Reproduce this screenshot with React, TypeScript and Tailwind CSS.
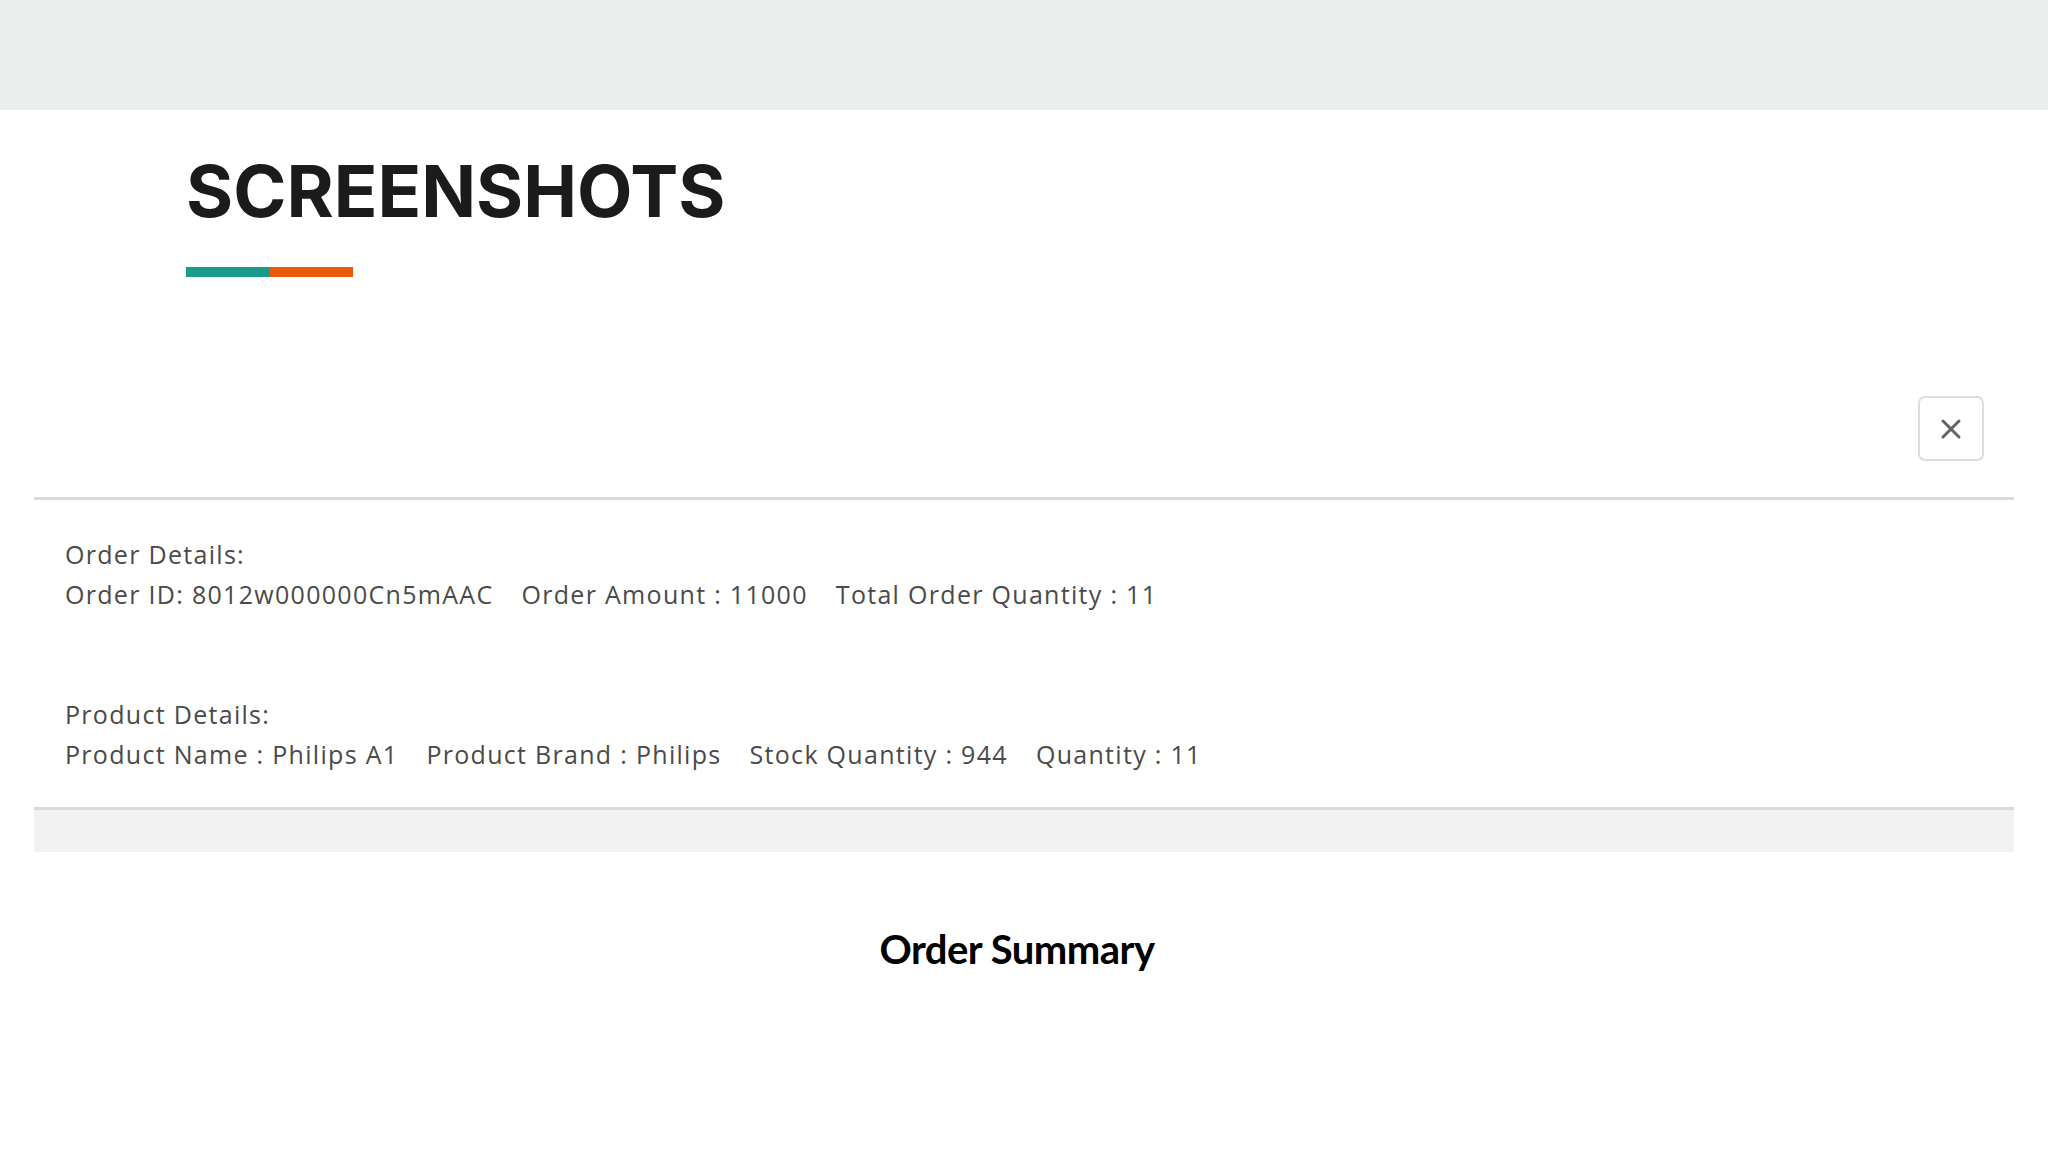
import React from "react";

const orderInfo = [
  "Order ID: 8012w000000Cn5mAAC",
  "Order Amount : 11000",
  "Total Order Quantity : 11",
];

const productInfo = [
  "Product Name : Philips A1",
  "Product Brand : Philips",
  "Stock Quantity : 944",
  "Quantity : 11",
];

function CloseIcon() {
  return (
    <svg width="22" height="22" viewBox="0 0 22 22" fill="none">
      <path d="M3 3 L19 19 M19 3 L3 19" stroke="#636363" strokeWidth="3" strokeLinecap="round" />
    </svg>
  );
}

function DetailBlock({ title, items }: { title: string; items: string[] }) {
  return (
    <div className="flex flex-col">
      <div className="h-[40px] leading-[40px]">{title}</div>
      <div className="flex h-[40px] items-center gap-[28px] leading-[40px]">
        {items.map((item) => (
          <span key={item}>{item}</span>
        ))}
      </div>
    </div>
  );
}

export default function App() {
  return (
    <div className="min-h-[1152px] w-full bg-white">
      {/* top strip */}
      <div className="h-[110px] w-full bg-[#e9eeed]" />

      {/* heading */}
      <div className="pl-[186px] pt-[45px]">
        <h1
          className="text-[72px] font-bold leading-none text-[#1b1b1b]"
          style={{ fontFamily: "Inter, 'Open Sans', sans-serif" }}
        >
          SCREENSHOTS
        </h1>
        <div className="mt-[40px] flex h-[10px] w-[167px]">
          <div className="h-full w-[84px] bg-[#1a9a8a]" />
          <div className="h-full w-[83px] bg-[#ea5b0c]" />
        </div>
      </div>

      {/* modal snapshot */}
      <div className="mx-[34px] mt-[119px]">
        <div className="flex justify-end border-b-[3px] border-[#d9d9d9] pb-[36px] pr-[30px]">
          <button className="flex h-[65px] w-[66px] items-center justify-center rounded-[7px] border-2 border-[#dddddd] bg-white">
            <CloseIcon />
          </button>
        </div>

        <div
          className="flex flex-col gap-[80px] border-b-[3px] border-[#d9d9d9] pb-[33px] pl-[31px] pt-[34px] text-[25px] tracking-[1.3px] text-[#4a4a4a]"
          style={{ fontFamily: "'Open Sans', 'Noto Sans', sans-serif" }}
        >
          <DetailBlock title="Order Details:" items={orderInfo} />
          <DetailBlock title="Product Details:" items={productInfo} />
        </div>

        <div className="h-[42px] bg-[#f3f2f2]" />

        <div className="mt-[73px] flex justify-center pr-[14px]">
          <h2
            className="text-[40px] font-bold leading-[48px] tracking-[-0.5px] text-black"
            style={{ fontFamily: "Lato, 'Open Sans', sans-serif" }}
          >
            Order Summary
          </h2>
        </div>
      </div>
    </div>
  );
}
